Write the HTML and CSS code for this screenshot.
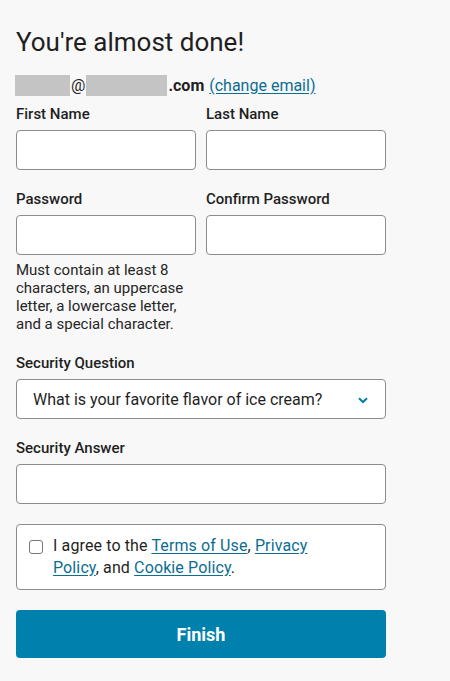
FILE: index.html
```html
<!DOCTYPE html>
<html lang="en">
<head>
<meta charset="utf-8">
<title>You're almost done!</title>
<link rel="stylesheet" href="styles.css">
</head>
<body>
<main class="page">
  <h1 class="title">You're almost done!</h1>
  <p class="email"><span class="redact r1"></span>@<span class="redact r2"></span><b>.com</b> <a href="#" class="link">(change email)</a></p>

  <div class="row">
    <div class="field">
      <label class="label">First Name</label>
      <div class="input"></div>
    </div>
    <div class="field">
      <label class="label">Last Name</label>
      <div class="input"></div>
    </div>
  </div>

  <div class="row">
    <div class="field">
      <label class="label">Password</label>
      <div class="input"></div>
      <p class="hint">Must contain at least 8 characters, an uppercase letter, a lowercase letter, and a special character.</p>
    </div>
    <div class="field">
      <label class="label">Confirm Password</label>
      <div class="input"></div>
    </div>
  </div>

  <div class="field full">
    <label class="label">Security Question</label>
    <div class="input select">
      <span>What is your favorite flavor of ice cream?</span>
      <svg class="chev" width="10" height="7" viewBox="0 0 10 7"><path d="M1 1.2 L5 5 L9 1.2" fill="none" stroke="#0080ab" stroke-width="2"/></svg>
    </div>
  </div>

  <div class="field full answer">
    <label class="label">Security Answer</label>
    <div class="input"></div>
  </div>

  <div class="agree">
    <span class="check"></span>
    <p class="agree-text">I agree to the <a href="#" class="link">Terms of Use</a>, <a href="#" class="link">Privacy Policy</a>, and <a href="#" class="link">Cookie Policy</a>.</p>
  </div>

  <button class="finish">Finish</button>
</main>
</body>
</html>
```
FILE: styles.css
```css
* { box-sizing: border-box; }
html, body { margin: 0; padding: 0; }
body {
  background: #f8f8f8;
  font-family: Roboto, "Liberation Sans", Arial, sans-serif;
  color: #1f1f1f;
}
.page {
  width: 402px;
  padding: 26px 16px 0 16px;
  display: flex;
  flex-direction: column;
}
.title {
  margin: 0;
  font-size: 26px;
  font-weight: 400;
  line-height: 32px;
  color: #1f1f1f;
}
.email {
  margin: 17px 0 0 0;
  font-size: 16px;
  line-height: 20px;
  display: flex;
  align-items: center;
}
.email b { font-weight: 700; margin-left: 1px; }
.email .link { margin-left: 5px; }
.redact {
  display: inline-block;
  height: 21px;
  background: #c4c4c4;
}
.r1 { width: 55px; margin-left: -1px; margin-right: 1px; }
.r2 { width: 81px; margin-left: 1px; }
.link {
  color: #0b6d92;
  text-decoration: underline;
  text-underline-offset: 2px;
}
.row {
  display: grid;
  grid-template-columns: 180px 180px;
  column-gap: 10px;
  margin-top: 9px;
}
.row + .row { margin-top: 20px; }
.field { display: flex; flex-direction: column; }
.full { width: 370px; margin-top: 21px; }
.answer { margin-top: 20px; }
.label {
  font-size: 15px;
  font-weight: 500;
  line-height: 18px;
  margin-bottom: 7px;
  color: #1f1f1f;
}
.input {
  height: 40px;
  background: #fff;
  border: 1px solid #8c8c8c;
  border-radius: 4px;
}
.hint {
  margin: 6px 0 0 0;
  font-size: 15px;
  line-height: 18px;
  color: #262626;
}
.select {
  display: flex;
  align-items: center;
  justify-content: space-between;
  padding: 0 17px 0 16px;
  font-size: 16px;
  color: #1f1f1f;
}
.chev { margin-top: 2px; }
.agree {
  margin-top: 20px;
  width: 370px;
  background: #fff;
  border: 1px solid #8c8c8c;
  border-radius: 4px;
  padding: 10px 12px 10px 12px;
  display: flex;
  align-items: flex-start;
  gap: 10px;
}
.check {
  flex: none;
  width: 14px;
  height: 14px;
  margin-top: 5px;
  border: 1px solid #767676;
  border-radius: 3px;
  background: #fff;
}
.agree-text {
  margin: 0;
  font-size: 16px;
  line-height: 22px;
  letter-spacing: 0.12px;
  width: 280px;
  color: #1f1f1f;
}
.finish {
  margin-top: 20px;
  width: 370px;
  height: 48px;
  border: 0;
  border-radius: 4px;
  background: #0080ac;
  color: #fff;
  font-family: Roboto, "Liberation Sans", Arial, sans-serif;
  font-size: 18px;
  font-weight: 700;
}
```
